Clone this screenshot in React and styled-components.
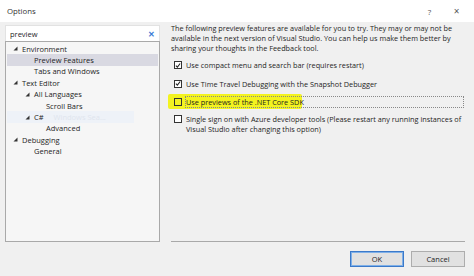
import React from 'react';
import styled, { createGlobalStyle } from 'styled-components';

const Global = createGlobalStyle`
    html, body {
        margin: 0;
        padding: 0;
        background: #f0f0f0;
    }
    * {
        box-sizing: border-box;
    }
`;

const Window = styled.div`
    width: 474px;
    height: 276px;
    display: flex;
    flex-direction: column;
    background: #f0f0f0;
    font-family: "Open Sans", "Noto Sans", sans-serif;
    font-size: 7.3px;
    color: #1e1e1e;
    overflow: hidden;
`;

const TitleBar = styled.div`
    height: 22px;
    flex-shrink: 0;
    background: #ffffff;
    display: flex;
    align-items: center;
    padding: 0 4px 0 7px;
`;

const Title = styled.span`
    flex: 1;
    font-size: 7.8px;
    color: #333;
`;

const TitleButton = styled.span`
    width: 27px;
    text-align: center;
    color: #555;
    font-size: ${props => props.big ? '10px' : '8px'};
`;

const Body = styled.div`
    flex: 1;
    display: flex;
    padding: 3px 9px 0 5px;
    gap: 11px;
`;

const LeftColumn = styled.div`
    width: 155px;
    display: flex;
    flex-direction: column;
    font-size: 7.5px;
`;

const SearchBox = styled.div`
    height: 16px;
    background: #ffffff;
    border: 1px solid #e2e2e2;
    border-bottom: none;
    display: flex;
    align-items: center;
    padding: 0 4px 0 4px;
`;

const SearchText = styled.span`
    flex: 1;
`;

const ClearIcon = styled.span`
    color: #3a7bd5;
    font-size: 8px;
    font-weight: 600;
`;

const Tree = styled.div`
    height: 201px;
    background: #f6f6f6;
    border: 1px solid #a9a9a9;
    padding: 1px 1px 0 1px;
    display: flex;
    flex-direction: column;
`;

const Row = styled.div`
    height: 11.4px;
    display: flex;
    align-items: center;
    white-space: nowrap;
    padding-left: ${props => 5 + props.level * 12}px;
    background: ${props => props.selected ? '#d9d9e2' : props.hover ? '#eef2f8' : 'transparent'};
    margin-right: ${props => props.hover ? '24px' : '0'};
`;

const Arrow = styled.span`
    width: 10px;
    display: flex;
    align-items: center;
    justify-content: flex-start;
    padding-left: 1px;
`;

const Faded = styled.span`
    color: #dfe5ee;
    margin-left: 10px;
`;

const RightColumn = styled.div`
    flex: 1;
    display: flex;
    flex-direction: column;
    margin-top: -2px;
    white-space: nowrap;
`;

const Intro = styled.p`
    margin: 0 0 5px 0;
    line-height: 10px;
`;

const Option = styled.div`
    display: flex;
    align-items: ${props => props.multi ? 'flex-start' : 'center'};
    gap: 4px;
    height: ${props => props.multi ? '22px' : '14px'};
    margin-bottom: ${props => props.multi ? '0' : '4.6px'};
    padding-left: 3px;
    line-height: 10px;
    position: relative;
`;

const Highlight = styled.span`
    position: absolute;
    left: -3px;
    top: -1px;
    width: 134px;
    height: 15px;
    background: #f3f320;
    border-radius: 2px;
`;

const Box = styled.span`
    width: 8px;
    height: 8px;
    flex-shrink: 0;
    border: 1px solid #333;
    background: ${props => props.dim ? 'transparent' : '#ffffff'};
    display: flex;
    align-items: center;
    justify-content: center;
    position: relative;
    margin-top: ${props => props.multi ? '1px' : '0'};
`;

const Label = styled.span`
    position: relative;
    flex: ${props => props.focus ? '1' : 'initial'};
    outline: ${props => props.focus ? '1px dotted #888' : 'none'};
    outline-offset: 0;
    margin-right: ${props => props.focus ? '2px' : '0'};
`;

const Separator = styled.div`
    margin-top: auto;
    height: 1px;
    background: #a9a9a9;
`;

const Footer = styled.div`
    height: 35px;
    flex-shrink: 0;
    display: flex;
    justify-content: flex-end;
    gap: 7px;
    padding: 9px 9px 0 0;
    font-size: 7.5px;
`;

const Button = styled.div`
    width: 54px;
    height: 16px;
    display: flex;
    align-items: center;
    justify-content: center;
    background: #e1e1e1;
    border: 1px solid ${props => props.primary ? '#3b79c9' : '#adadad'};
    box-shadow: ${props => props.primary ? 'inset 0 0 0 1px #7fb0e8' : 'none'};
`;

const Check = () => (
    <svg width="7" height="7" viewBox="0 0 7 7">
        <path d="M1 3.6 L2.8 5.4 L6 1.2" fill="none" stroke="#222" strokeWidth="1.2" />
    </svg>
);

const Triangle = () => (
    <svg width="5" height="5" viewBox="0 0 5 5">
        <path d="M4.5 0.5 L4.5 4.5 L0.5 4.5 Z" fill="#333" />
    </svg>
);

const tree = [
    { label: 'Environment', level: 0, open: true },
    { label: 'Preview Features', level: 1, selected: true },
    { label: 'Tabs and Windows', level: 1 },
    { label: 'Text Editor', level: 0, open: true },
    { label: 'All Languages', level: 1, open: true },
    { label: 'Scroll Bars', level: 2 },
    { label: 'C#', level: 1, open: true, hover: true },
    { label: 'Advanced', level: 2 },
    { label: 'Debugging', level: 0, open: true },
    { label: 'General', level: 1 },
];

const App = () => {
    return (
        <Window>
            <Global />
            <TitleBar>
                <Title>Options</Title>
                <TitleButton>?</TitleButton>
                <TitleButton big>×</TitleButton>
            </TitleBar>
            <Body>
                <LeftColumn>
                    <SearchBox>
                        <SearchText>preview</SearchText>
                        <ClearIcon>✕</ClearIcon>
                    </SearchBox>
                    <Tree>
                        {tree.map(item => (
                            <Row key={item.label} level={item.level} selected={item.selected} hover={item.hover}>
                                <Arrow>{item.open && <Triangle />}</Arrow>
                                {item.label}
                                {item.hover && <Faded>Windows Sea...</Faded>}
                            </Row>
                        ))}
                    </Tree>
                </LeftColumn>
                <RightColumn>
                    <Intro>
                        The following preview features are available for you to try. They may or may not be
                        <br />
                        available in the next version of Visual Studio. You can help us make them better by
                        <br />
                        sharing your thoughts in the Feedback tool.
                    </Intro>
                    <Option>
                        <Box><Check /></Box>
                        <Label>Use compact menu and search bar (requires restart)</Label>
                    </Option>
                    <Option>
                        <Box><Check /></Box>
                        <Label>Use Time Travel Debugging with the Snapshot Debugger</Label>
                    </Option>
                    <Option>
                        <Highlight />
                        <Box dim />
                        <Label focus>Use previews of the .NET Core SDK</Label>
                    </Option>
                    <Option multi>
                        <Box multi />
                        <Label>
                            Single sign on with Azure developer tools (Please restart any running instances of
                            <br />
                            Visual Studio after changing this option)
                        </Label>
                    </Option>
                    <Separator />
                </RightColumn>
            </Body>
            <Footer>
                <Button primary>OK</Button>
                <Button>Cancel</Button>
            </Footer>
        </Window>
    );
};

export default App;
